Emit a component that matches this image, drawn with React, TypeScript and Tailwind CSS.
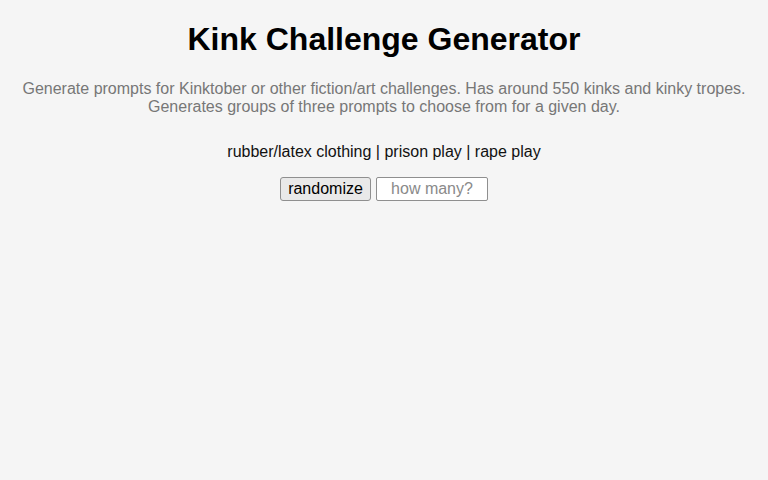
import React from "react";

export default function App() {
  return (
    <div
      className="min-h-[480px] w-full bg-[#f5f5f5] text-center text-black"
      style={{ fontFamily: '"Liberation Sans", Arial, sans-serif' }}
    >
      <h1 className="pt-[21px] text-[32px] font-bold leading-[37px]">Kink Challenge Generator</h1>
      <p className="mt-[22px] px-4 text-[16px] leading-[18px] text-[#777777]">
        Generate prompts for Kinktober or other fiction/art challenges. Has around 550 kinks and kinky tropes.
        <br />
        Generates groups of three prompts to choose from for a given day.
      </p>
      <div className="mt-[27px] text-[16px] leading-[18px] text-[#111111]">
        rubber/latex clothing | prison play | rape play
      </div>
      <div className="mt-[16px] flex items-center justify-center gap-[5px]">
        <button className="h-[24px] w-[91px] rounded-[3px] border border-[#8f8f8f] bg-[#e9e9e9] pb-[1px] text-[16px] leading-[18px] text-black">
          randomize
        </button>
        <input
          type="text"
          placeholder="how many?"
          className="h-[24px] w-[112px] rounded-[2px] border border-[#8f8f8f] bg-white pb-[1px] text-center text-[16px] text-black outline-none placeholder:text-[#8a8a8a]"
        />
      </div>
    </div>
  );
}
